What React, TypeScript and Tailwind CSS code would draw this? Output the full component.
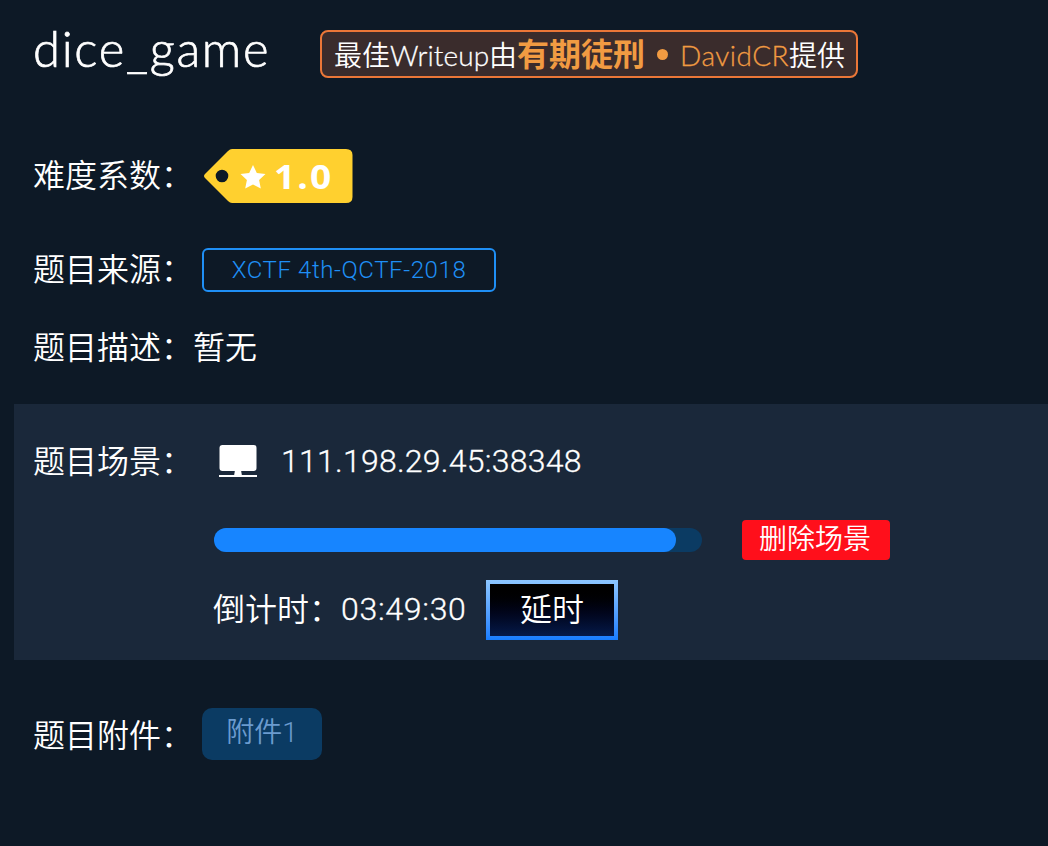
import React from 'react';

interface RowProps {
  label: string;
  className?: string;
  labelClassName?: string;
  children: React.ReactNode;
}

// Label on the left, value on the right
const Row: React.FC<RowProps> = ({ label, className = '', labelClassName = '', children }) => (
  <div className={`flex items-center ${className}`}>
    <span className={`-ml-px mr-px w-40 shrink-0 whitespace-nowrap text-[32px] leading-8 ${labelClassName}`}>
      {label}
    </span>
    {children}
  </div>
);

const DifficultyTag: React.FC = () => (
  <div className="relative ml-2.5 h-[54px] w-[149px]">
    <svg width="149" height="54" viewBox="0 0 149 54" className="block">
      <path
        fillRule="evenodd"
        fill="#ffd02f"
        d="M28 0H142Q148.500 0 148.500 6V48Q148.500 54 142 54H28Q26 54 24 52L1 29Q-1 27 1 25L24 2Q26 0 28 0ZM18 20.700A6.300 6.300 0 1 0 18 33.300A6.300 6.300 0 1 0 18 20.700Z"
      />
      <path
        fill="#fff"
        d="M49 16L52.800 23.900L61.500 25L55.100 31L56.800 39.500L49 35.400L41.200 39.500L42.900 31L36.500 25L45.200 23.900Z"
      />
    </svg>
    <span className="absolute left-[70px] top-[10px] origin-left scale-x-[1.09] font-['Open_Sans'] text-[34px] font-bold leading-[34px] tracking-[2px]">
      1.0
    </span>
  </div>
);

const MonitorIcon: React.FC = () => (
  <svg width="38" height="33" viewBox="0 0 38 33" fill="#fff" className="ml-[25px] shrink-0">
    <rect x="0.500" y="0" width="37" height="26" rx="3" />
    <path d="M16 25H22L23 31H15Z" />
    <rect x="0" y="30" width="38" height="2" />
  </svg>
);

interface ProgressBarProps {
  percent: number;
}

const ProgressBar: React.FC<ProgressBarProps> = ({ percent }) => (
  <div className="h-6 w-[488px] rounded-full bg-[#0b3b63]">
    <div className="h-full rounded-full bg-[#1785ff]" style={{ width: `${percent}%` }} />
  </div>
);

export default function App() {
  return (
    <div className="h-[846px] w-full overflow-hidden bg-[#0d1926] font-['Lato','Noto_Sans_CJK_SC',sans-serif] font-[350] text-white">
      {/* Header */}
      <div className="flex h-12 pl-[33px] mt-[30px]">
        <h1 className="-mt-[11px] w-[287px] text-[49px] leading-[58px] tracking-[1.7px] [-webkit-text-stroke:0.7px]">dice_game</h1>
        <div className="flex h-12 w-[538px] items-center whitespace-nowrap rounded-lg border-2 border-[#eb7738] bg-[#3a2c2c] pl-3 text-[28px] leading-7">
          <span className="mt-0.5">最佳</span>
          <span className="mt-0.5 w-[99px] tracking-[0.1px] [-webkit-text-stroke:0.3px]">Writeup</span>
          <span className="mt-0.5">由</span>
          <span className="text-[32px] font-bold leading-8 text-[#f19b42]">有期徒刑</span>
          <span className="mx-3 size-[11px] rounded-full bg-[#f19b42]" />
          <span className="mt-0.5 w-[109px] tracking-[0.5px] text-[#f19b42] [-webkit-text-stroke:0.3px]">DavidCR</span>
          <span className="mt-0.5">提供</span>
        </div>
      </div>

      <Row label="难度系数：" className="mt-[71px] h-[54px] pl-[34px]" labelClassName="-mt-0.5">
        <DifficultyTag />
      </Row>

      <Row label="题目来源：" className="mt-[45px] h-11 pl-[34px]" labelClassName="-mt-0.5">
        <span className="ml-2 flex h-11 w-[294px] items-center justify-center rounded-md border-2 border-[#1f8ff5] font-[Roboto] text-[24px] font-light leading-6 tracking-[0.6px] text-[#1f8ff5]">
          XCTF 4th-QCTF-2018
        </span>
      </Row>

      <Row label="题目描述：" className="mt-[39px] h-8 pl-[34px]">
        <span className="-ml-px text-[32px] leading-8">暂无</span>
      </Row>

      {/* Scene */}
      <div className="ml-[14px] mt-[41px] h-64 bg-[#1a283a] pl-5 pt-10">
        <Row label="题目场景：" className="h-[34px]">
          <MonitorIcon />
          <span className="ml-6 font-[Roboto] text-[32px] font-light leading-8 tracking-[0.25px] [-webkit-text-stroke:0.3px]">111.198.29.45:38348</span>
        </Row>
        <div className="ml-[180px] mt-[42px] flex items-center">
          <ProgressBar percent={94.670} />
          <button className="ml-10 h-10 w-[148px] rounded bg-[#ff0f1b] pb-1 pr-0.5 text-[28px] leading-9">删除场景</button>
        </div>
        <div className="ml-[180px] mt-5 flex items-center text-[32px] leading-8">
          <span className="-ml-px -mt-0.5 w-32 whitespace-nowrap">倒计时：</span>
          <span className="-mt-0.5 w-[145px] font-[Roboto] font-light tracking-[0.7px] [-webkit-text-stroke:0.3px]">03:49:30</span>
          <button className="h-[60px] w-[132px] bg-linear-to-b from-[#8cc6ff] to-[#177dff] p-1">
            <span className="flex h-full items-center justify-center bg-linear-to-b from-black to-[#061a4a] pb-0.5">延时</span>
          </button>
        </div>
      </div>

      <Row label="题目附件：" className="mt-12 h-[52px] pl-[34px]" labelClassName="mt-0.5">
        <button className="ml-2 h-[52px] w-[120px] rounded-[10px] bg-[#0b3b63] pb-0.5 font-['Roboto','Noto_Sans_CJK_SC',sans-serif] text-[28px] leading-7 text-[#6b9bcf]">
          附件1
        </button>
      </Row>
    </div>
  );
}
